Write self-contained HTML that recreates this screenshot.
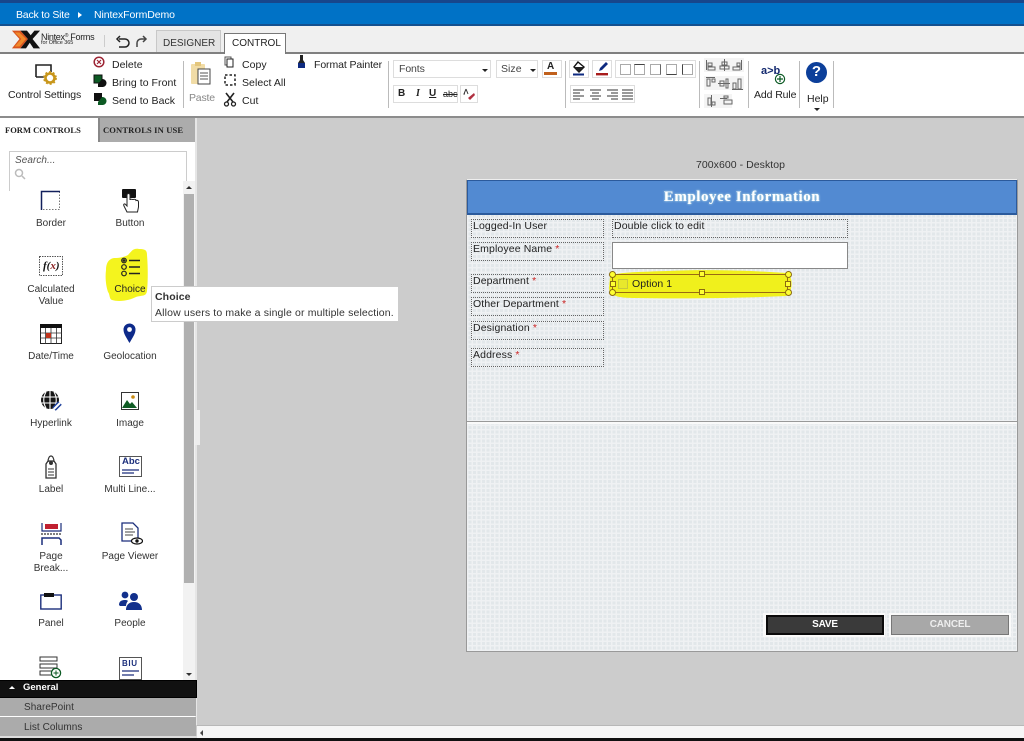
<!DOCTYPE html>
<html><head><meta charset="utf-8"><style>
html,body{margin:0;padding:0;background:#ccc}
#p{position:relative;width:1024px;height:741px;overflow:hidden;background:#ccc;font-family:"Liberation Sans",sans-serif;font-size:10.5px;color:#222;filter:blur(.35px)}
#p div,#p svg,#p span.a{position:absolute}
.t{white-space:nowrap;letter-spacing:.05px;line-height:12px}
.c{text-align:center;line-height:12px;letter-spacing:0;color:#333;width:90px;font-size:10px;margin-top:1px}
.sep{width:1px;background:#bbb}
.box{background:#fff;border:1px solid #ddd;box-sizing:border-box}
.lab{left:471px;width:133px;box-sizing:border-box;border:1px dotted #666;height:19px;padding:1px 0 0 1px;line-height:11px;white-space:nowrap;letter-spacing:.12px;font-size:10.5px;color:#222}
.lab b{color:#c22;font-weight:normal}
.h{width:6px;height:6px;background:#ffff33;border:1px solid #8a6a10;box-sizing:border-box}
.r{width:7px;height:7px;border-radius:50%;background:#ffff33;border:1px solid #8a6a10;box-sizing:border-box}
</style></head><body><div id="p">

<div style="left:0;top:0;width:1024px;height:3px;background:#17468c"></div>
<div style="left:0;top:3px;width:1024px;height:21px;background:#0072c6"></div>
<div style="left:0;top:24px;width:1024px;height:2px;background:#14508f"></div>
<div class="t" style="left:16px;top:9px;color:#fff;font-size:10.5px;letter-spacing:-.2px">Back to Site</div>
<div style="left:78px;top:12px;width:0;height:0;border-left:4px solid #fff;border-top:3px solid transparent;border-bottom:3px solid transparent"></div>
<div class="t" style="left:94px;top:9px;color:#fff;font-size:10.5px;letter-spacing:-.1px">NintexFormDemo</div>

<div style="left:0;top:26px;width:1024px;height:26px;background:#f0f0f0"></div>
<div style="left:0;top:52px;width:1024px;height:2px;background:#808080"></div>
<svg style="left:11px;top:29px" width="30" height="21" viewBox="0 0 32 21"><path d="M1 1h9l8 9-8 10H1l8-10z" fill="#d9541e"/><path d="M4 3h5l7 7-7 8H4l7-8z" fill="#f08a2c"/><path d="M10 1h7l4 5 4-5h6l-8 9 8 10h-7l-4-6-4 6h-6l8-10z" fill="#111"/></svg>
<div class="t" style="left:41px;top:30px;font-size:9px;letter-spacing:-.3px;color:#222">Nintex<span style="font-size:5px;vertical-align:3px">®</span> Forms</div>
<div class="t" style="left:41px;top:39px;font-size:5.500px;letter-spacing:-.05px;color:#222;line-height:8px">for Office 365</div>
<div class="sep" style="left:104px;top:35px;height:12px;background:#ccc"></div>
<svg style="left:115px;top:35px" width="34" height="14" viewBox="0 0 34 14" fill="none" stroke="#222" stroke-width="1.5"><path d="M4 4h6a4 4 0 0 1 0 8H4"/><path d="M5 1L2 4l3 3"/><path d="M31 4h-5a4 4 0 0 0-4 4v4" stroke="#444"/><path d="M28 1l3 3-3 3" stroke="#444"/></svg>
<div style="left:156px;top:30px;width:65px;height:22px;background:#e4e4e4;border:1px solid #c8c8c8;border-bottom:0;box-sizing:border-box"></div>
<div class="t" style="left:163px;top:38px;letter-spacing:0;font-size:10px;color:#333">DESIGNER</div>
<div style="left:224px;top:33px;width:62px;height:21px;background:#fff;border:1px solid #777;border-bottom:0;box-sizing:border-box"></div>
<div class="t" style="left:232px;top:38px;letter-spacing:0;font-size:10px;color:#222">CONTROL</div>

<div style="left:0;top:54px;width:1024px;height:62px;background:#fff"></div>
<div style="left:0;top:116px;width:1024px;height:2px;background:#8c8c8c"></div>

<svg style="left:34px;top:63px" width="23" height="23" viewBox="0 0 23 23"><path d="M2 14V2h15v7M2 14h8" fill="none" stroke="#222" stroke-width="1.6"/><circle cx="16" cy="15" r="4.5" fill="none" stroke="#c8961a" stroke-width="2.6"/><circle cx="16" cy="15" r="6.2" fill="none" stroke="#c8961a" stroke-width="1.4" stroke-dasharray="2 2"/></svg>
<div class="t" style="left:8px;top:89px;width:76px;letter-spacing:-.1px">Control Settings</div>
<svg style="left:93px;top:56px" width="14" height="52" viewBox="0 0 14 52"><circle cx="6" cy="6" r="4.800" fill="#fff" stroke="#9c2433" stroke-width="1.500"/><path d="M4 4l4 4M8 4l-4 4" stroke="#9c2433" stroke-width="1.200"/><rect x="1" y="19" width="8" height="8" fill="#0c5a24" stroke="#111"/><path d="M9 23a4 4 0 0 1 1 8H5v-3" fill="#111"/><rect x="1" y="37" width="8" height="8" fill="#111"/><path d="M9 41a4 4 0 0 1 1 8H5v-3" fill="#0c5a24"/></svg>
<div class="t" style="left:112px;top:59px">Delete</div>
<div class="t" style="left:112px;top:77px">Bring to Front</div>
<div class="t" style="left:112px;top:95px">Send to Back</div>
<div class="sep" style="left:183px;top:61px;height:47px"></div>
<svg style="left:190px;top:60px" width="22" height="26" viewBox="0 0 22 26"><rect x="1" y="4" width="14" height="20" rx="1" fill="#f1dca6"/><rect x="5" y="2" width="6" height="4" fill="#e4c67c"/><rect x="8" y="9" width="12" height="15" fill="#fff" stroke="#444"/><path d="M10 13h8M10 16h8M10 19h8" stroke="#555"/></svg>
<div class="t" style="left:189px;top:92px;color:#888;letter-spacing:-.2px">Paste</div>
<svg style="left:223px;top:56px" width="14" height="52" viewBox="0 0 14 52" fill="none" stroke="#222"><rect x="2" y="1" width="6" height="8" fill="#fff" stroke="#555"/><rect x="4" y="3" width="6" height="8" fill="#fff"/><rect x="2" y="19" width="10" height="10" stroke-width="1.500" stroke-dasharray="2.500 2"/><path d="M3 37l7 9M11 37l-7 9" stroke-width="1.600"/><circle cx="3.500" cy="48" r="2" stroke-width="1.300"/><circle cx="10.500" cy="48" r="2" stroke-width="1.300"/></svg>
<div class="t" style="left:242px;top:59px">Copy</div>
<div class="t" style="left:242px;top:77px">Select All</div>
<div class="t" style="left:242px;top:95px">Cut</div>
<svg style="left:297px;top:55px" width="9" height="14" viewBox="0 0 9 14"><rect x="3" y="0" width="3" height="5" fill="#222"/><path d="M1 8l2-3h3l2 3z" fill="#222"/><rect x="1" y="8" width="7" height="5" fill="#0e2a80"/></svg>
<div class="t" style="left:314px;top:59px;letter-spacing:-.1px">Format Painter</div>
<div class="sep" style="left:388px;top:61px;height:47px"></div>

<div class="box" style="left:393px;top:60px;width:98px;height:18px"></div>
<div class="t" style="left:399px;top:63px;color:#444;letter-spacing:-.1px">Fonts</div>
<div style="left:482px;top:69px;border-top:3px solid #222;border-left:3px solid transparent;border-right:3px solid transparent"></div>
<div class="box" style="left:496px;top:60px;width:42px;height:18px"></div>
<div class="t" style="left:501px;top:63px;color:#444">Size</div>
<div style="left:530px;top:69px;border-top:3px solid #222;border-left:3px solid transparent;border-right:3px solid transparent"></div>
<div class="box" style="left:542px;top:60px;width:20px;height:18px"></div>
<div class="t" style="left:547px;top:61px;font-weight:bold;color:#222;letter-spacing:0;font-size:10px">A</div>
<div style="left:544px;top:72px;width:13px;height:3px;background:#c0601c"></div>
<div class="box" style="left:393px;top:85px;width:65px;height:18px"></div>
<div class="t" style="left:398px;top:88px;font-weight:bold;font-size:10px;color:#222">B</div>
<div class="t" style="left:416px;top:88px;font-weight:bold;font-style:italic;font-size:10px;color:#222;font-family:'Liberation Serif',serif">I</div>
<div class="t" style="left:429px;top:88px;font-weight:bold;text-decoration:underline;font-size:10px;color:#222">U</div>
<div class="t" style="left:443px;top:88px;text-decoration:line-through;font-size:9px;letter-spacing:0;color:#222">abc</div>
<div class="box" style="left:460px;top:85px;width:18px;height:18px"></div>
<svg style="left:463px;top:87px" width="13" height="14" viewBox="0 0 13 14"><path d="M3 2L1 7h1M3 2l2 5" stroke="#333" fill="none"/><path d="M5 11l6-5 1 2-5 5z" fill="#b03040"/></svg>
<div class="sep" style="left:565px;top:61px;height:47px"></div>

<div class="box" style="left:569px;top:60px;width:20px;height:18px"></div>
<svg style="left:571px;top:61px" width="16" height="15" viewBox="0 0 16 15"><path d="M7 1l6 5-5 5-5-5z" fill="none" stroke="#111" stroke-width="1.400"/><path d="M3 6h10l-5 5z" fill="#222"/><rect x="2" y="12.500" width="11" height="2" fill="#0e2a80"/></svg>
<div class="box" style="left:592px;top:60px;width:20px;height:18px"></div>
<svg style="left:594px;top:61px" width="16" height="15" viewBox="0 0 16 15"><path d="M12 1l2 2-6 6-3 1 1-3z" fill="#0e2a80"/><rect x="2" y="12" width="12" height="2.400" fill="#a81c1c"/></svg>
<div class="box" style="left:615px;top:60px;width:81px;height:18px"></div>
<div style="left:620px;top:64px;width:9px;height:9px;border:1px solid #aaa"></div>
<div style="left:634px;top:64px;width:9px;height:9px;border:1px solid #aaa;border-top-color:#444"></div>
<div style="left:650px;top:64px;width:9px;height:9px;border:1px solid #aaa;border-right-color:#666"></div>
<div style="left:666px;top:64px;width:9px;height:9px;border:1px solid #aaa;border-bottom-color:#444"></div>
<div style="left:682px;top:64px;width:9px;height:9px;border:1px solid #aaa;border-left-color:#444"></div>
<div class="box" style="left:570px;top:85px;width:65px;height:18px"></div>
<svg style="left:573px;top:89px" width="60" height="11" viewBox="0 0 60 11" stroke="#333"><path d="M0 1h11M0 4h7M0 7h11M0 10h7"/><path d="M17 1h11M19 4h7M17 7h11M19 10h7"/><path d="M34 1h11M38 4h7M34 7h11M38 10h7"/><path d="M49 1h11M49 4h11M49 7h11M49 10h11"/></svg>
<div class="sep" style="left:699px;top:61px;height:47px"></div>

<div style="left:704px;top:58px;width:40px;height:14px;background:#f4f4f4"></div>
<div style="left:704px;top:76px;width:40px;height:14px;background:#f4f4f4"></div>
<div style="left:704px;top:94px;width:28px;height:14px;background:#f4f4f4"></div>
<svg style="left:704px;top:58px" width="40" height="50" viewBox="0 0 40 50" fill="none" stroke="#666"><path d="M2.500 2v10M4 5h4v3H4zM4 9h7v3H4z"/><path d="M20.500 1v12M18 4h5v3h-5zM16 8h9v3h-9z"/><path d="M37.500 2v10M33 5h3v3h-3zM29 9h7v3h-7z"/><path d="M2 19.500h9M3 21h3v7H3zM8 21h3v3H8z"/><path d="M14 25.500h12M16 23h4v5h-4zM22 21h2v9h-2z"/><path d="M28 31.500h11M29 25h3v6h-3zM34 21h3v10h-3z"/><path d="M7.500 37v12M4 40h3v7H4zM8 44h3v3H8z"/><path d="M16 40.500h7M20 42h8v4h-8zM20 38h4v2h-4z"/></svg>
<div class="sep" style="left:748px;top:61px;height:47px"></div>
<div class="t" style="left:761px;top:65px;color:#12286e;font-weight:bold;font-size:11px;letter-spacing:0">a&gt;b</div>
<svg style="left:774px;top:72px" width="12" height="13" viewBox="0 0 12 13" fill="none" stroke="#0c5a24" stroke-width="1.200"><circle cx="6" cy="7" r="4.600"/><path d="M3 7h6M6 4v6"/></svg>
<div class="t" style="left:754px;top:89px;letter-spacing:-.1px">Add Rule</div>
<div class="sep" style="left:799px;top:61px;height:47px"></div>
<div style="left:806px;top:62px;width:21px;height:21px;border-radius:50%;background:#0c3f9a"></div>
<div class="t" style="left:806px;top:66px;width:21px;text-align:center;color:#fff;font-weight:bold;font-size:15px;letter-spacing:0">?</div>
<div class="t" style="left:807px;top:93px;letter-spacing:0">Help</div>
<div style="left:814px;top:108px;border-top:3px solid #222;border-left:3px solid transparent;border-right:3px solid transparent"></div>
<div class="sep" style="left:833px;top:61px;height:47px"></div>

<!-- left panel -->
<div style="left:0;top:118px;width:197px;height:607px;background:#fff"></div>
<div style="left:98px;top:118px;width:98px;height:24px;background:#acacac;border-left:2px solid #888;box-sizing:border-box"></div>
<div class="t" style="left:5px;top:124px;font-family:'Liberation Serif',serif;font-weight:bold;font-size:8.500px;letter-spacing:0;color:#222">FORM CONTROLS</div>
<div class="t" style="left:103px;top:124px;font-family:'Liberation Serif',serif;font-weight:bold;font-size:8.500px;letter-spacing:.15px;color:#222">CONTROLS IN USE</div>
<div style="left:9px;top:151px;width:178px;height:40px;border:1px solid #ccc;border-bottom:0;box-sizing:border-box;background:#fff"></div>
<div class="t" style="left:15px;top:155px;font-style:italic;color:#555;font-size:10px">Search...</div>
<svg style="left:14px;top:168px" width="12" height="12" viewBox="0 0 12 12" fill="none" stroke="#bbb" stroke-width="1.500"><circle cx="5" cy="5" r="3.500"/><path d="M8 8l3 3"/></svg>

<div style="left:183px;top:181px;width:12px;height:499px;background:#f2f2f2"></div>
<div style="left:184px;top:194px;width:10px;height:389px;background:#b0b0b0"></div>
<div style="left:186px;top:186px;border-bottom:3px solid #333;border-left:3px solid transparent;border-right:3px solid transparent"></div>
<div style="left:186px;top:673px;border-top:3px solid #333;border-left:3px solid transparent;border-right:3px solid transparent"></div>
<div style="left:195px;top:118px;width:2px;height:607px;background:#e6e6e6"></div>
<div style="left:195px;top:410px;width:5px;height:35px;background:#eee"></div>

<!-- icons -->
<svg style="left:40px;top:190px" width="21" height="21" viewBox="0 0 21 21" fill="none"><rect x="1.500" y="1.500" width="18" height="18" stroke="#777" stroke-dasharray="1.500 1.500"/><path d="M1.500 20V1.500H20" stroke="#12205c" stroke-width="1.500"/></svg>
<div class="c" style="left:6px;top:217px">Border</div>
<svg style="left:121px;top:188px" width="19" height="25" viewBox="0 0 19 25"><rect x="1" y="1" width="14" height="9" rx="1" fill="#111"/><path d="M6 24l-3-6c-1-2 1-3 2-1l1 1V7c0-2 3-2 3 0v5c0-1 3-1 3 0 0-1 3-1 3 .5 1-.5 2.500 0 2.500 1.500v5l-1 5z" fill="#fff" stroke="#222"/></svg>
<div class="c" style="left:85px;top:217px">Button</div>

<svg style="left:39px;top:256px" width="24" height="20" viewBox="0 0 24 20"><rect x=".5" y=".5" width="23" height="19" fill="none" stroke="#555" stroke-dasharray="1.500 1"/></svg>
<div class="t" style="left:43px;top:260px;font-family:'Liberation Serif',serif;font-style:italic;font-weight:bold;font-size:11px;letter-spacing:0;color:#111">f(<span style="color:#8a1f1f">x</span>)</div>
<div class="c" style="left:6px;top:283px">Calculated<br>Value</div>

<svg style="left:105px;top:248px" width="43" height="55" viewBox="0 0 43 55"><path d="M1 22c0-6 2-11 8-12 6 0 10-1 14-3 4-4 5-7 11-6 6 0 8 1 8 6 1 12 1 26 0 36-1 6-5 4-11 6-8 4-18 5-24 3-3-1-2-6-4-8C1 38 0 30 1 22z" fill="#f4f41e"/></svg>
<svg style="left:120px;top:257px" width="21" height="20" viewBox="0 0 21 20" fill="none" stroke="#222"><circle cx="4" cy="3.500" r="2.300" stroke-width="1.200"/><circle cx="4" cy="10" r="2.300" stroke-width="1.200"/><circle cx="4" cy="16.500" r="2.300" stroke-width="1.200"/><circle cx="4" cy="3.500" r=".9" fill="#222"/><path d="M9 3.500h11M9 10h11M9 16.500h11" stroke-width="1.600"/></svg>
<div class="c" style="left:85px;top:283px;color:#222">Choice</div>

<div style="left:151px;top:286px;width:248px;height:36px;background:#fff;border:1px solid #ccc;box-sizing:border-box"></div>
<div class="t" style="left:155px;top:291px;font-weight:bold;letter-spacing:.1px;color:#333">Choice</div>
<div class="t" style="left:155px;top:307px;letter-spacing:.14px;color:#333">Allow users to make a single or multiple selection.</div>

<svg style="left:40px;top:324px" width="22" height="20" viewBox="0 0 22 20"><rect x=".5" y=".5" width="21" height="19" fill="#fff" stroke="#222"/><rect width="22" height="4" fill="#111"/><path d="M0 9h22M0 14h22M5.500 4v16M11 4v16M16.500 4v16" stroke="#333" stroke-width=".8"/><rect x="6" y="9" width="5" height="5" fill="#c2341c"/></svg>
<div class="c" style="left:6px;top:350px">Date/Time</div>
<svg style="left:123px;top:323px" width="13" height="20" viewBox="0 0 13 20"><path d="M6.500 20C3 14 .5 10.500.5 6.500a6 6 0 0 1 12 0c0 4-2.500 7.500-6 13.500z" fill="#0d2a8a"/><circle cx="6.500" cy="6.500" r="2.400" fill="#fff"/></svg>
<div class="c" style="left:85px;top:350px">Geolocation</div>

<svg style="left:40px;top:390px" width="23" height="23" viewBox="0 0 23 23"><circle cx="10" cy="10" r="9" fill="#151515"/><path d="M1 7h18M1 13h18M10 1v18M6 2c-3 5-3 11 0 16M14 2c3 5 3 11 0 16" stroke="#fff" stroke-width="1.100" fill="none"/><path d="M14 19l6-6" stroke="#1c3f9a" stroke-width="5"/><path d="M14 19l6-6" stroke="#fff" stroke-width="2"/></svg>
<div class="c" style="left:6px;top:417px">Hyperlink</div>
<svg style="left:121px;top:392px" width="18" height="18" viewBox="0 0 18 18"><rect x=".5" y=".5" width="17" height="17" fill="#fff" stroke="#333"/><circle cx="12" cy="5" r="1.800" fill="#c88a12"/><path d="M1 16l5-8 3 4 2-2 5 6z" fill="#0f5c24"/></svg>
<div class="c" style="left:85px;top:417px">Image</div>

<svg style="left:44px;top:455px" width="14" height="24" viewBox="0 0 14 24" fill="none" stroke="#333"><path d="M2 9l2-3h6l2 3v14H2z" fill="#fff" stroke-width="1.300"/><path d="M4 7c0-8 6-8 6 0" stroke-width="1.200"/><circle cx="7" cy="8" r="1.500" fill="#333"/><path d="M4 14h6M4 17h6M4 20h6"/></svg>
<div class="c" style="left:6px;top:483px">Label</div>
<svg style="left:119px;top:456px" width="23" height="21" viewBox="0 0 23 21"><rect x=".5" y=".5" width="22" height="20" fill="#fff" stroke="#555"/><path d="M3 14h17M3 17h12" stroke="#1c2f7c" stroke-width="1.300"/></svg>
<div class="t" style="left:122px;top:456px;font-weight:bold;font-size:9.500px;letter-spacing:0;color:#1c2f7c">Abc</div>
<div class="c" style="left:85px;top:483px">Multi Line...</div>

<svg style="left:41px;top:522px" width="21" height="24" viewBox="0 0 21 24" fill="none"><path d="M1 1v8h19V1" stroke="#1c2f7c" stroke-width="1.200"/><rect x="4" y="2" width="13" height="5" fill="#c02030"/><path d="M0 12h21" stroke="#555" stroke-dasharray="2 1" stroke-width="1.500"/><path d="M1 23v-7h17l2 2v5" stroke="#1c2f7c" stroke-width="1.500"/></svg>
<div class="c" style="left:6px;top:550px">Page<br>Break...</div>
<svg style="left:121px;top:522px" width="22" height="24" viewBox="0 0 22 24" fill="none"><path d="M1 1h11l5 5v13H1z" fill="#fff" stroke="#1c2f7c" stroke-width="1.300"/><path d="M4 7h8M4 10h10M4 13h8" stroke="#444"/><ellipse cx="16" cy="19" rx="5.500" ry="3" fill="#fff" stroke="#111" stroke-width="1.200"/><circle cx="16" cy="19" r="1.700" fill="#111"/></svg>
<div class="c" style="left:85px;top:550px">Page Viewer</div>

<svg style="left:40px;top:593px" width="22" height="17" viewBox="0 0 22 17"><rect x=".8" y="2" width="20.400" height="14" fill="#fff" stroke="#1c2f7c" stroke-width="1.400"/><rect x="4" y="0" width="10" height="4" fill="#111"/></svg>
<div class="c" style="left:6px;top:617px">Panel</div>
<svg style="left:119px;top:591px" width="23" height="19" viewBox="0 0 23 19" fill="#12308c"><circle cx="6" cy="4" r="3.400"/><circle cx="15" cy="6" r="4"/><path d="M0 14c0-4 3-5 6-5 1 0 2 0 3 1-1 1-2 3-2 5H1zM7 19c0-5 3-8 8-8s8 3 8 8z"/></svg>
<div class="c" style="left:85px;top:617px">People</div>

<svg style="left:39px;top:656px" width="24" height="24" viewBox="0 0 24 24" fill="none" stroke="#333"><rect x="1" y="1" width="17" height="4"/><rect x="1" y="8" width="17" height="4"/><rect x="1" y="15" width="14" height="4"/><circle cx="17" cy="17" r="4.600" fill="#fff" stroke="#0c5a24" stroke-width="1.300"/><path d="M14.500 17h5M17 14.500v5" stroke="#0c5a24"/></svg>
<svg style="left:119px;top:657px" width="23" height="23" viewBox="0 0 23 23"><rect x=".5" y=".5" width="22" height="22" fill="#fff" stroke="#555"/><path d="M3 14h17M3 18h12" stroke="#1c2f7c" stroke-width="1.300"/></svg>
<div class="t" style="left:122px;top:658px;font-weight:bold;font-size:8px;letter-spacing:.6px;color:#1c2f7c">BIU</div>

<div style="left:0;top:680px;width:197px;height:18px;background:#111;box-sizing:border-box;border:1px solid #000;border-left:0"></div>
<div style="left:9px;top:686px;border-bottom:3px solid #fff;border-left:3px solid transparent;border-right:3px solid transparent"></div>
<div class="t" style="left:23px;top:682px;color:#fff;font-weight:bold;font-size:9.500px;letter-spacing:0">General</div>
<div style="left:0;top:698px;width:196px;height:18px;background:#ababab"></div>
<div class="t" style="left:24px;top:702px;color:#333;font-size:10px">SharePoint</div>
<div style="left:0;top:717px;width:196px;height:19px;background:#ababab"></div>
<div class="t" style="left:24px;top:722px;color:#333;font-size:10px">List Columns</div>
<div style="left:0;top:736px;width:197px;height:2px;background:#ddd"></div>

<div style="left:197px;top:725px;width:827px;height:13px;background:#f6f6f6;border-top:1px solid #b8b8b8;box-sizing:border-box"></div>
<div style="left:200px;top:730px;border-right:3px solid #444;border-top:3px solid transparent;border-bottom:3px solid transparent"></div>
<div style="left:0;top:738px;width:1024px;height:3px;background:#111"></div>

<!-- form -->
<div class="t" style="left:696px;top:159px;letter-spacing:.05px;color:#333">700x600 - Desktop</div>
<div style="left:466px;top:179px;width:552px;height:473px;border:1px solid #999;border-top-color:#eee;box-sizing:border-box;background-color:#e2e7ea;background-image:repeating-linear-gradient(0deg,#eff1f3 0 1.500px,transparent 1.500px 4.500px),repeating-linear-gradient(90deg,#eff1f3 0 1.500px,transparent 1.500px 4.500px)"></div>
<div style="left:467px;top:180px;width:550px;height:35px;background:#528ad2;border:1px solid #2b5a9c;border-bottom-width:2px;box-sizing:border-box"></div>
<div class="t" style="left:467px;top:189px;width:550px;text-align:center;font-family:'Liberation Serif',serif;font-weight:bold;font-size:15px;letter-spacing:.55px;color:#fff;line-height:16px;text-shadow:0 0 2px #dfe">Employee Information</div>
<div style="left:467px;top:421px;width:550px;height:1px;background:#999"></div>
<div style="left:467px;top:422px;width:550px;height:2px;background:#fafafa"></div>

<div class="lab" style="top:219px">Logged-In User</div>
<div class="lab" style="top:242px">Employee Name <b>*</b></div>
<div class="lab" style="top:274px">Department <b>*</b></div>
<div class="lab" style="top:297px">Other Department <b>*</b></div>
<div class="lab" style="top:321px">Designation <b>*</b></div>
<div class="lab" style="top:348px">Address <b>*</b></div>
<div class="lab" style="left:612px;width:236px;top:219px;padding-left:1px">Double click to edit</div>
<div style="left:612px;top:242px;width:236px;height:27px;background:#fff;border:1px solid #888;box-sizing:border-box"></div>

<svg style="left:608px;top:268px" width="186" height="32" viewBox="0 0 186 32"><path d="M2 9C6 4 30 4 60 3c40-2 90 0 118 2 8 2 7 20 0 23-40 2-100 3-150 2C10 30 1 28 1 20z" fill="#f0f01c"/></svg>
<div style="left:612px;top:274px;width:176px;height:19px;border:1px solid #9a6a14;box-sizing:border-box"></div>
<div style="left:618px;top:279px;width:10px;height:10px;border:1px solid #c8c83c;background:#e8e82c;box-sizing:border-box"></div>
<div class="t" style="left:632px;top:278px;letter-spacing:.05px;color:#222">Option 1</div>
<div class="r" style="left:609px;top:271px"></div><div class="h" style="left:699px;top:271px"></div><div class="r" style="left:785px;top:271px"></div>
<div class="h" style="left:610px;top:281px"></div><div class="h" style="left:785px;top:281px"></div>
<div class="r" style="left:609px;top:289px"></div><div class="h" style="left:699px;top:289px"></div><div class="r" style="left:785px;top:289px"></div>

<div style="left:763px;top:613px;width:122px;height:24px;background:#fafafa"></div>
<div style="left:766px;top:615px;width:118px;height:20px;background:#3a3a3a;border:2px solid #0a0a0a;box-sizing:border-box"></div>
<div class="t" style="left:766px;top:619px;width:118px;text-align:center;color:#fff;font-size:10px;font-weight:bold;letter-spacing:-.2px">SAVE</div>
<div style="left:889px;top:613px;width:122px;height:24px;background:#fafafa"></div>
<div style="left:891px;top:615px;width:118px;height:20px;background:#a8a8a8;border:1px solid #777;box-sizing:border-box"></div>
<div class="t" style="left:891px;top:619px;width:118px;text-align:center;color:#eee;font-size:10px;font-weight:bold;letter-spacing:-.2px">CANCEL</div>

</div></body></html>
